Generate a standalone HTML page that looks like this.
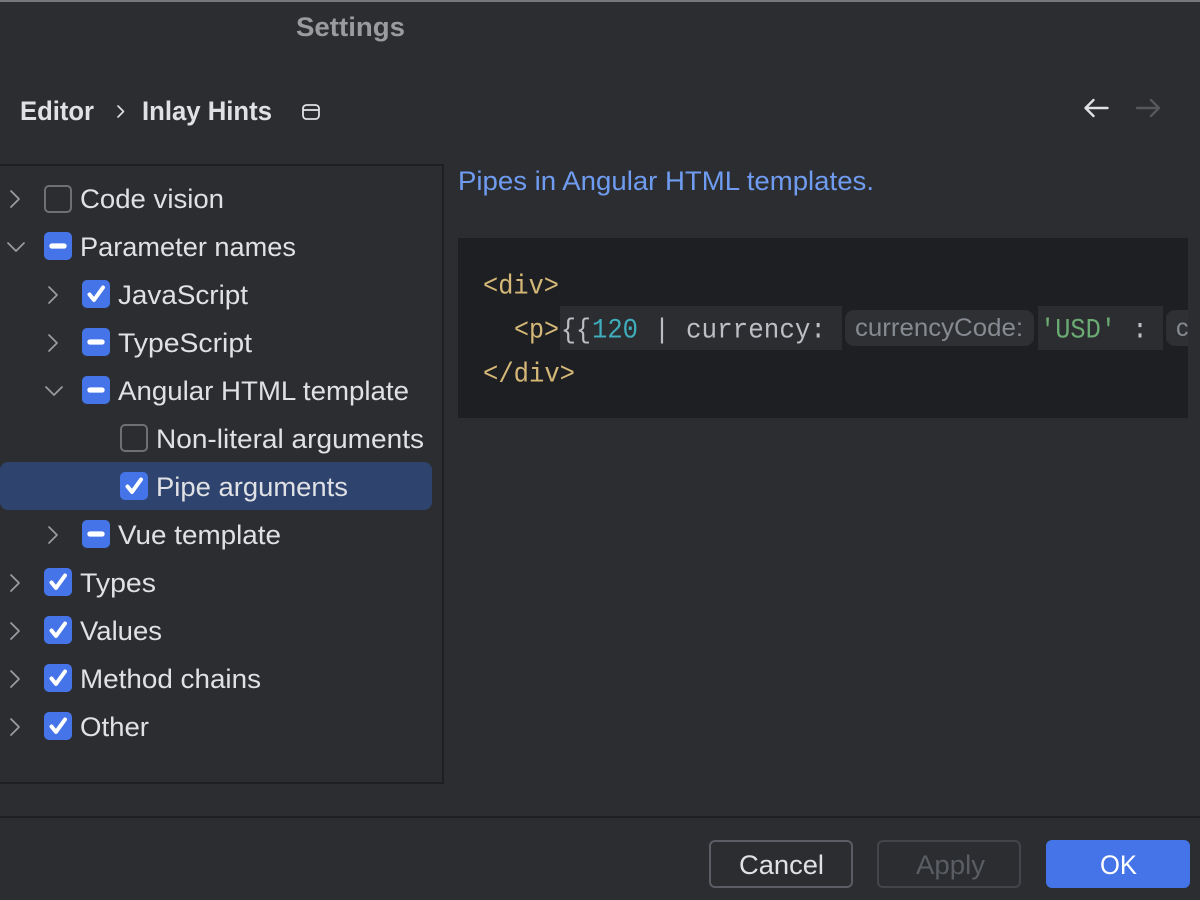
<!DOCTYPE html>
<html>
<head>
<meta charset="utf-8">
<title>Settings</title>
<style>
html,body{margin:0;padding:0;background:#2b2d30;width:1200px;height:900px;overflow:hidden}
svg{display:block;position:absolute;left:0;top:0}
text{font-family:"Liberation Sans",sans-serif;font-size:27px;fill:#dfe1e5}
.b{font-weight:bold}
.m{font-family:"Liberation Mono",monospace;font-size:28px}
.y{fill:#d5b778}
.w{fill:#bcbec4}
.chev{fill:none;stroke:#9a9ca1;stroke-width:1.7;stroke-linecap:round;stroke-linejoin:round}
.ck{fill:none;stroke:#fff;stroke-width:4;stroke-linecap:round;stroke-linejoin:round}
</style>
</head>
<body>
<svg width="1200" height="900" viewBox="0 0 1200 900" xmlns="http://www.w3.org/2000/svg">
<defs>
<g id="on"><rect width="28" height="28" rx="5" fill="#4574e8"/><path class="ck" d="M7.500 14.500l4.500 5.500 9-12.500"/></g>
<g id="mid"><rect width="28" height="28" rx="5" fill="#4574e8"/><rect x="5.300" y="11.400" width="17.400" height="5.200" rx="2.600" fill="#fff"/></g>
<g id="off"><rect x="1" y="1" width="26" height="26" rx="4" fill="none" stroke="#6f7074" stroke-width="2"/></g>
</defs>
<rect width="1200" height="900" fill="#2b2d30"/>
<rect width="1200" height="2" fill="#77787c"/>

<text class="b" x="296" y="36" style="fill:#9a9b9f" textLength="109" lengthAdjust="spacingAndGlyphs">Settings</text>

<text class="b" x="20" y="120" textLength="74" lengthAdjust="spacingAndGlyphs">Editor</text>
<path d="M118 106l5.500 5.500-5.500 5.500" fill="none" stroke="#dfe1e5" stroke-width="1.600" stroke-linecap="round" stroke-linejoin="round"/>
<text class="b" x="142" y="120" textLength="130" lengthAdjust="spacingAndGlyphs">Inlay Hints</text>
<rect x="303" y="105" width="16" height="14" rx="3.500" fill="none" stroke="#dfe1e5" stroke-width="1.800"/>
<path d="M303 110h16" stroke="#dfe1e5" stroke-width="1.800"/>

<path d="M1107.500 108h-22M1093.500 100l-8 8 8 8" fill="none" stroke="#dfe1e5" stroke-width="2.400" stroke-linecap="round" stroke-linejoin="round"/>
<path d="M1137 108h22M1151 100l8 8-8 8" fill="none" stroke="#55575b" stroke-width="2.400" stroke-linecap="round" stroke-linejoin="round"/>

<path d="M0 165h443v618H0" fill="none" stroke="#1e1f22" stroke-width="2"/>
<rect x="0" y="462" width="432" height="48" rx="8" fill="#2e436e"/>

<path class="chev" d="M11 191l8 8-8 8"/>
<use href="#off" x="44" y="185"/>
<text x="80" y="208" textLength="144" lengthAdjust="spacingAndGlyphs">Code vision</text>

<path class="chev" d="M8 243l8 8 8-8"/>
<use href="#mid" x="44" y="232"/>
<text x="80" y="256" textLength="216" lengthAdjust="spacingAndGlyphs">Parameter names</text>

<path class="chev" d="M49 287l8 8-8 8"/>
<use href="#on" x="82" y="280"/>
<text x="118" y="304" textLength="130" lengthAdjust="spacingAndGlyphs">JavaScript</text>

<path class="chev" d="M49 335l8 8-8 8"/>
<use href="#mid" x="82" y="328"/>
<text x="118" y="352" textLength="134" lengthAdjust="spacingAndGlyphs">TypeScript</text>

<path class="chev" d="M46 387l8 8 8-8"/>
<use href="#mid" x="82" y="376"/>
<text x="118" y="400" textLength="291" lengthAdjust="spacingAndGlyphs">Angular HTML template</text>

<use href="#off" x="120" y="424"/>
<text x="156" y="448" textLength="268" lengthAdjust="spacingAndGlyphs">Non-literal arguments</text>

<use href="#on" x="120" y="472"/>
<text x="156" y="496" textLength="192" lengthAdjust="spacingAndGlyphs">Pipe arguments</text>

<path class="chev" d="M49 527l8 8-8 8"/>
<use href="#mid" x="82" y="520"/>
<text x="118" y="544" textLength="163" lengthAdjust="spacingAndGlyphs">Vue template</text>

<path class="chev" d="M11 575l8 8-8 8"/>
<use href="#on" x="44" y="568"/>
<text x="80" y="592" textLength="76" lengthAdjust="spacingAndGlyphs">Types</text>

<path class="chev" d="M11 623l8 8-8 8"/>
<use href="#on" x="44" y="616"/>
<text x="80" y="640" textLength="82" lengthAdjust="spacingAndGlyphs">Values</text>

<path class="chev" d="M11 671l8 8-8 8"/>
<use href="#on" x="44" y="664"/>
<text x="80" y="688" textLength="181" lengthAdjust="spacingAndGlyphs">Method chains</text>

<path class="chev" d="M11 719l8 8-8 8"/>
<use href="#on" x="44" y="712"/>
<text x="80" y="736" textLength="69" lengthAdjust="spacingAndGlyphs">Other</text>

<text x="458" y="190" style="fill:#6f9cf0" textLength="416" lengthAdjust="spacingAndGlyphs">Pipes in Angular HTML templates.</text>

<rect x="458" y="238" width="730" height="180" fill="#1e1f22"/>
<rect x="560" y="306" width="282" height="44" fill="#2b2d30"/>
<rect x="1038" y="306" width="125" height="44" fill="#2b2d30"/>
<rect x="845" y="310" width="189" height="36" rx="9" fill="#2f3033"/>
<path d="M1188 310h-13a9 9 0 0 0-9 9v18a9 9 0 0 0 9 9h13z" fill="#2f3033"/>

<text class="m y" x="483" y="293.500" textLength="76" lengthAdjust="spacingAndGlyphs">&lt;div&gt;</text>
<text class="m y" x="514" y="337.500" textLength="45" lengthAdjust="spacingAndGlyphs">&lt;p&gt;</text>
<text class="m w" x="561" y="337.500" textLength="30" lengthAdjust="spacingAndGlyphs">{{</text>
<text class="m" x="592" y="337.500" style="fill:#3fadbb" textLength="46" lengthAdjust="spacingAndGlyphs">120</text>
<text class="m w" x="654" y="337.500" textLength="16" lengthAdjust="spacingAndGlyphs">|</text>
<text class="m w" x="686" y="337.500" textLength="140" lengthAdjust="spacingAndGlyphs">currency:</text>
<text x="855" y="336" style="fill:#868a91;font-size:25px" textLength="168" lengthAdjust="spacingAndGlyphs">currencyCode:</text>
<text class="m" x="1040" y="337.500" style="fill:#6aab73" textLength="76" lengthAdjust="spacingAndGlyphs">'USD'</text>
<text class="m w" x="1132" y="337.500" textLength="16" lengthAdjust="spacingAndGlyphs">:</text>
<text x="1176" y="336" style="fill:#868a91;font-size:25px">c</text>
<rect x="1188" y="300" width="12" height="50" fill="#2b2d30"/>
<text class="m y" x="483" y="381.500" textLength="92" lengthAdjust="spacingAndGlyphs">&lt;/div&gt;</text>

<rect x="0" y="816" width="1200" height="2" fill="#1e1f22"/>

<rect x="710" y="841" width="142" height="46" rx="5" fill="none" stroke="#5a5d63" stroke-width="2"/>
<text x="739" y="874" textLength="85" lengthAdjust="spacingAndGlyphs">Cancel</text>
<rect x="878" y="841" width="142" height="46" rx="5" fill="none" stroke="#43454a" stroke-width="2"/>
<text x="916" y="874" style="fill:#5a5d63" textLength="69" lengthAdjust="spacingAndGlyphs">Apply</text>
<rect x="1046" y="840" width="144" height="48" rx="6" fill="#4574e8"/>
<text x="1100" y="874" style="fill:#fff" textLength="37" lengthAdjust="spacingAndGlyphs">OK</text>
</svg>
</body>
</html>
